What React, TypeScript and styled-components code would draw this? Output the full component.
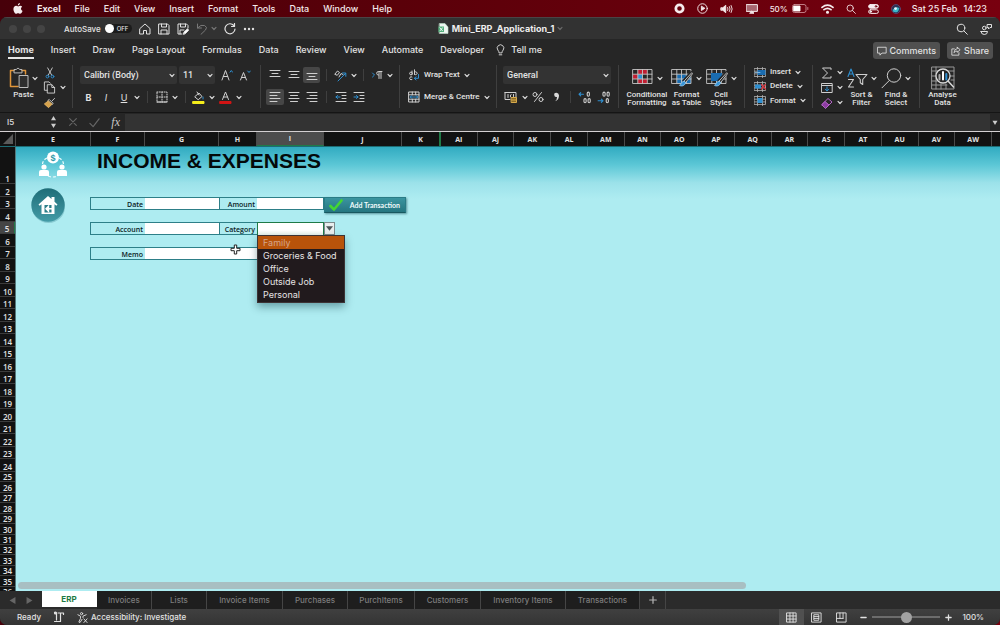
import React from 'react';
import styled, { createGlobalStyle, css } from 'styled-components';

const ui = `Inter, "Liberation Sans", sans-serif`;
const compact = `Roboto, "Liberation Sans", sans-serif`;
const calibri = `"Open Sans", "Noto Sans", sans-serif`;
const ink = '#e2e2e2';
const blue = '#2f8fd0';

const GlobalStyle = createGlobalStyle`
  * { box-sizing: border-box; }
  body { margin: 0; background: #3a0008; font-family: ${ui}; color: ${ink}; }
  button, input, select { font: inherit; color: inherit; border: 0; padding: 0; margin: 0; background: none; }
  svg { display: block; flex: none; }
`;

const Desktop = styled.div`
  height: 100vh;
  min-height: 400px;
  display: flex;
  flex-direction: column;
  overflow: hidden;
  background: linear-gradient(90deg, #47000a, #5a0009 40%, #78000f);
`;

/* ---------- system menu bar ---------- */
const MenuBar = styled.nav`
  flex: none;
  height: 17px;
  display: flex;
  align-items: center;
  padding: 0 13px;
  font-size: 9px;
  font-weight: 500;
  color: #f4e9ea;
`;
const MenuItem = styled.button<{ $strong?: boolean }>`
  margin-left: 14px;
  font-weight: ${(p) => (p.$strong ? 700 : 500)};
`;
const Spacer = styled.div`
  flex: 1;
`;
const StatusIcons = styled.div`
  display: flex;
  align-items: center;
  gap: 12px;
  margin-right: 11px;
`;
const Battery = styled.span`
  display: flex;
  align-items: center;
  gap: 4px;
  font-size: 8px;
`;
const Clock = styled.span`
  display: flex;
  gap: 6px;
`;

/* ---------- window chrome ---------- */
const Window = styled.main`
  flex: 1;
  min-height: 0;
  display: flex;
  flex-direction: column;
  background: #262626;
  border-radius: 7px;
  overflow: hidden;
`;
const TitleBar = styled.header`
  flex: none;
  height: 22px;
  display: grid;
  grid-template-columns: 1fr auto 1fr;
  align-items: center;
  padding: 0 8px 0 9px;
  background: #323232;
  border-top: 1px solid #4a4446;
`;
const TitleSide = styled.div<{ $end?: boolean }>`
  display: flex;
  align-items: center;
  gap: ${(p) => (p.$end ? 12 : 7)}px;
  justify-content: ${(p) => (p.$end ? 'flex-end' : 'flex-start')};
`;
const Lights = styled.div`
  display: flex;
  gap: 6px;
  margin-right: 12px;
`;
const Light = styled.button`
  width: 8px;
  height: 8px;
  border-radius: 50%;
  background: #444;
`;
const AutoSave = styled.label`
  display: flex;
  align-items: center;
  gap: 4px;
  font-size: 8px;
  font-weight: 500;
`;
const Toggle = styled.span`
  display: flex;
  align-items: center;
  gap: 3px;
  width: 27px;
  height: 9px;
  border-radius: 5px;
  background: #1b1b1b;
  font-size: 6px;
`;
const ToggleInput = styled.input`
  appearance: none;
  width: 9px;
  height: 9px;
  border-radius: 50%;
  background: #fff;
`;
const FileName = styled.h1`
  display: flex;
  align-items: center;
  gap: 3px;
  margin: 0;
  font-size: 9px;
  font-weight: 700;
  color: #ededed;
`;
const IconButton = styled.button<{ $dim?: boolean }>`
  display: flex;
  align-items: center;
  gap: 3px;
  opacity: ${(p) => (p.$dim ? 0.4 : 1)};
`;

const TabStrip = styled.nav`
  flex: none;
  height: 23px;
  display: flex;
  align-items: center;
  padding: 0 7px 0 8px;
  gap: 17px;
  font-size: 9px;
  font-weight: 500;
`;
const RibbonTab = styled.button<{ $active?: boolean }>`
  height: 17px;
  white-space: nowrap;
  font-weight: ${(p) => (p.$active ? 700 : 500)};
  border-bottom: 2px solid ${(p) => (p.$active ? '#e6e6e6' : 'transparent')};
`;
const TellMe = styled(RibbonTab)`
  display: flex;
  align-items: center;
  gap: 6px;
  margin-left: -5px;
`;
const PillRow = styled.div`
  display: flex;
  gap: 7px;
`;
const Pill = styled.button`
  height: 17px;
  padding: 0 4px;
  display: flex;
  align-items: center;
  gap: 3px;
  border-radius: 3px;
  background: #505050;
  font-size: 9px;
  font-weight: 500;
`;

/* ---------- ribbon ---------- */
const Ribbon = styled.section`
  flex: none;
  height: 50px;
  display: flex;
  align-items: flex-start;
  padding-top: 3px;
`;
const Group = styled.div<{ $w: number; $pad: number; $gap?: number; $last?: boolean }>`
  flex: none;
  width: ${(p) => p.$w}px;
  height: 43px;
  padding-left: ${(p) => p.$pad}px;
  display: flex;
  gap: ${(p) => p.$gap ?? 0}px;
  border-right: 1px solid ${(p) => (p.$last ? 'transparent' : '#3f3f3f')};
`;
const Stack = styled.div<{ $tight?: boolean }>`
  display: flex;
  flex-direction: column;
  gap: ${(p) => (p.$tight ? 0 : 2)}px;
`;
const ToolRow = styled.div<{ $short?: boolean }>`
  height: ${(p) => (p.$short ? 15 : 20)}px;
  display: flex;
  align-items: center;
`;
const Tool = styled.button<{ $w: number; $on?: boolean; $left?: boolean }>`
  width: ${(p) => p.$w}px;
  height: 16px;
  display: flex;
  align-items: center;
  justify-content: ${(p) => (p.$left ? 'flex-start' : 'center')};
  gap: 4px;
  border-radius: 2px;
  font-size: 9px;
  ${(p) => p.$on && css`background: #464646;`}
`;
const TextTool = styled.button`
  display: flex;
  align-items: center;
  gap: 4px;
  font: 500 8px/12px ${compact};
  white-space: nowrap;
`;
const Rule = styled.span`
  width: 1px;
  height: 12px;
  background: #3f3f3f;
`;
const BigTool = styled.button<{ $w: number }>`
  width: ${(p) => p.$w}px;
  display: flex;
  flex-direction: column;
  align-items: center;
  justify-content: flex-start;
  font: 500 8px/8px ${compact};
`;
const BigIcon = styled.span`
  height: 26px;
  display: flex;
  align-items: center;
  gap: 3px;
`;
const PickerFrame = styled.label<{ $w: number }>`
  width: ${(p) => p.$w}px;
  height: 18px;
  margin-right: 2px;
  display: grid;
  align-items: center;
  background: #333;
  border-radius: 2px;
  > * { grid-area: 1 / 1; }
  > svg { justify-self: end; margin-right: 2px; pointer-events: none; }
`;
const Picker = styled.select`
  appearance: none;
  width: 100%;
  height: 18px;
  padding: 0 4px;
  font: 500 9px/18px ${compact};
  outline: 0;
`;

/* ---------- formula bar ---------- */
const FormulaBar = styled.section`
  flex: none;
  height: 20px;
  display: flex;
  align-items: center;
  border-top: 1px solid #151515;
  border-bottom: 1px solid #d4d0d2;
`;
const NameBox = styled.input`
  width: 50px;
  padding-left: 7px;
  font-size: 8px;
  font-weight: 500;
  outline: 0;
`;
const FormulaButtons = styled.div`
  width: 68px;
  display: flex;
  align-items: center;
  justify-content: space-between;
  padding: 0 5px 0 11px;
`;
const Fx = styled.span`
  font: italic 12px "Liberation Serif", serif;
  color: #c9c9c9;
`;
const FormulaInput = styled.input`
  flex: 1;
  min-width: 0;
  height: 17px;
  background: #333;
  outline: 0;
`;

/* ---------- sheet ---------- */
const ColumnHeads = styled.div`
  flex: none;
  height: 15px;
  display: flex;
  background: #121212;
  border-bottom: 1px solid #1d6c74;
  padding-right: 8px;
`;
const ColumnHead = styled.div<{ $w?: number; $on?: boolean; $split?: boolean }>`
  ${(p) => (p.$w ? css`flex: none; width: ${p.$w}px;` : css`flex: 1; min-width: 0;`)}
  display: flex;
  align-items: center;
  justify-content: center;
  font: 700 7px ${calibri};
  border-right: 1px solid #4a4a4a;
  ${(p) => p.$split && css`border-right: 2px solid #1f7a47;`}
  ${(p) => p.$on && css`background: #4d4d4d; border-bottom: 1px solid #1f7a47;`}
`;
const SheetArea = styled.div`
  flex: 1;
  min-height: 0;
  display: flex;
`;
const RowHeads = styled.div`
  width: 16px;
  flex: none;
  overflow: hidden;
  background: #121212;
  border-right: 1px solid #54797c;
`;
const RowBlock = styled.div<{ $h: number }>`
  height: ${(p) => p.$h}px;
  display: grid;
  grid-auto-rows: 1fr;
`;
const RowHead = styled.div<{ $on?: boolean }>`
  display: flex;
  align-items: flex-end;
  justify-content: center;
  min-height: 0;
  border-bottom: 1px solid #3c3c3c;
  font: 600 8px/9px ${calibri};
  ${(p) => p.$on && css`background: #454545; border-right: 1px solid #1f7a47;`}
`;
const Canvas = styled.div`
  position: relative;
  flex: 1;
  display: flex;
  overflow: hidden;
  color: #0b2023;
  background: linear-gradient(#31abc1, #5cc7d6 18px, #9ce2ea 36px, #aeecf1 52px);
`;
const IconColumn = styled.div`
  width: 74px;
  flex: none;
  padding: 4px 0 0 14px;
  display: flex;
  flex-direction: column;
  gap: 8px;
  > svg:first-child { margin-left: 8px; }
`;
const Content = styled.div`
  flex: 1;
`;
const SheetTitle = styled.h2`
  height: 50px;
  margin: 0;
  padding: 2px 0 0 7px;
  font: 700 21px/24px "Liberation Sans", sans-serif;
  color: #04090a;
`;
const Form = styled.form`
  display: flex;
  flex-direction: column;
  gap: 12px;
`;
const FormRow = styled.div`
  height: 13px;
  display: flex;
`;
const FieldLabel = styled.label<{ $w: number; $inner?: boolean }>`
  width: ${(p) => p.$w}px;
  border: 1px solid #2d7f88;
  border-right-width: 0;
  border-left-width: ${(p) => (p.$inner ? 0 : 1)}px;
  padding: 2px 2px 0 0;
  text-align: right;
  font: 600 7px/10px ${calibri};
`;
const fieldBox = css<{ $w: number }>`
  width: ${(p) => p.$w}px;
  height: 13px;
  background: #fff;
  border: 1px solid #2d7f88;
  border-left-width: 0;
  border-radius: 0;
  outline: 0;
`;
const Field = styled.input<{ $w: number }>`
  ${fieldBox}
`;
const AddButton = styled.button`
  width: 82px;
  height: 16px;
  padding: 0 5px 1px 4px;
  display: flex;
  align-items: center;
  justify-content: space-between;
  background: linear-gradient(#3b95a0, #257680);
  border: 1px solid #2a7c86;
  border-bottom-color: #185860;
  box-shadow: 1px 1px 2px rgba(0, 60, 70, 0.5);
  color: #f2fbfc;
  font: 700 7px Lato, sans-serif;
  white-space: nowrap;
`;
const Combo = styled.div`
  position: relative;
  display: flex;
`;
const ComboField = styled.input<{ $w: number }>`
  ${fieldBox}
  height: 14px;
  border: 1px solid #1f7a47;
  background: linear-gradient(#fff, #fff 60%, #e8f3ee);
`;
const ComboArrow = styled.button`
  width: 11px;
  height: 13px;
  display: flex;
  align-items: center;
  justify-content: center;
  background: #e9eeee;
  border: 1px solid #7c8b8d;
`;
const Options = styled.ul`
  position: absolute;
  z-index: 2;
  top: 13px;
  left: 0;
  width: 88px;
  margin: 0;
  padding: 0 0 1px;
  list-style: none;
  background: #211a1d;
  color: #e6e3e4;
  border: 1px solid #3c3335;
  box-shadow: 0 4px 8px rgba(0, 50, 60, 0.4);
  font: 400 9px/13px ${ui};
`;
const Option = styled.li<{ $on?: boolean }>`
  padding-left: 5px;
  white-space: nowrap;
  ${(p) => p.$on && css`background: #b8530a; color: #d5a58a;`}
`;
const Pointer = styled.svg`
  position: absolute;
  z-index: 3;
  left: 214px;
  top: 97px;
`;
const ScrollThumb = styled.div`
  position: absolute;
  left: 2px;
  bottom: 2px;
  width: 74%;
  height: 7px;
  border-radius: 4px;
  background: #a8bfc2;
`;

/* ---------- sheet tabs and status ---------- */
const SheetTabs = styled.nav`
  flex: none;
  height: 18px;
  display: flex;
  align-items: flex-start;
  background: #2b2b2b;
  font-size: 8px;
  font-weight: 500;
`;
const TabArrows = styled.div`
  width: 42px;
  height: 18px;
  display: flex;
  align-items: center;
  justify-content: center;
  gap: 10px;
`;
const SheetTab = styled.button<{ $w: number; $on?: boolean; $plain?: boolean }>`
  flex: none;
  width: ${(p) => p.$w}px;
  height: ${(p) => (p.$on ? 16 : 18)}px;
  background: ${(p) => (p.$on ? '#fff' : p.$plain ? '#2b2b2b' : '#1e1e1e')};
  color: ${(p) => (p.$on ? '#1d7a43' : p.$plain ? '#bbb' : '#7d7d7d')};
  font-weight: ${(p) => (p.$on ? 700 : 500)};
  border-right: 1px solid ${(p) => (p.$on ? '#fff' : '#454545')};
  display: flex;
  align-items: center;
  justify-content: center;
`;
const StatusBar = styled.footer`
  flex: none;
  height: 16px;
  display: flex;
  align-items: center;
  padding: 0 16px 0 17px;
  background: linear-gradient(#404040, #343434);
  font-size: 8px;
  font-weight: 500;
`;
const StatusItem = styled.span`
  display: flex;
  align-items: center;
  gap: 3px;
  margin-right: 12px;
`;
const ViewButton = styled.button<{ $on?: boolean }>`
  width: 25px;
  height: 16px;
  display: flex;
  align-items: center;
  justify-content: center;
  background: ${(p) => (p.$on ? '#505050' : 'transparent')};
`;
const ZoomGroup = styled.div`
  display: flex;
  align-items: center;
  gap: 5px;
  margin-left: 6px;
`;
const Zoom = styled.input`
  appearance: none;
  width: 68px;
  height: 12px;
  background: linear-gradient(#6c6c6c, #6c6c6c) center / 100% 2px no-repeat;
  &::-webkit-slider-thumb {
    appearance: none;
    width: 11px;
    height: 11px;
    border-radius: 50%;
    background: #a2a2a2;
  }
`;
const ZoomValue = styled.output`
  margin-left: 5px;
`;

/* ---------- drawings ---------- */
type IconProps = { w: number; h?: number; box?: string; sw?: number; c?: string; children: React.ReactNode };
const Icon = ({ w, h = w, box = '0 0 12 12', sw = 1, c = '#cfcfcf', children }: IconProps) => (
  <svg width={w} height={h} viewBox={box} fill="none" stroke={c} strokeWidth={sw} strokeLinecap="round" strokeLinejoin="round" aria-hidden="true">
    {children}
  </svg>
);
const Chevron = ({ c = '#d8d8d8' }: { c?: string }) => (
  <Icon w={6} h={5} box="0 0 6 5" sw={1.2} c={c}><path d="M1 1.400 3 3.500 5 1.400" /></Icon>
);
const Triangle = ({ d, c = '#bcbcbc', w = 5, h = 5 }: { d: string; c?: string; w?: number; h?: number }) => (
  <svg width={w} height={h} viewBox="0 0 6 6" fill={c} aria-hidden="true"><path d={d} /></svg>
);
const Lines = ({ rows }: { rows: number[][] }) => (
  <Icon w={12}>{rows.map(([x1, x2, y]) => <path key={y} d={`M${x1} ${y}H${x2}`} />)}</Icon>
);
const SearchIcon = ({ w, c = ink }: { w: number; c?: string }) => (
  <Icon w={w} c={c}><circle cx="5" cy="5" r="3.8" /><path d="m7.900 7.900 3.400 3.400" /></Icon>
);
const MiniGrid = ({ children }: { children?: React.ReactNode }) => (
  <Icon w={12} h={11} box="0 0 12 11" sw={0.8} c="#b5b5b5">
    <path d="M.5 1.500h11v8H.5zM.5 4.200h11M.5 6.900h11M3.500.5v10M8.500.5v10" />
    {children}
  </Icon>
);
const Grid = ({ fill, children }: { fill: React.ReactNode; children?: React.ReactNode }) => (
  <Icon w={22} h={20} box="0 0 22 20" sw={0.9} c="#c4c4c4">
    {fill}
    <path d="M1 1.500h19v14H1zM1 6.200h19M1 11h19M5.800 1.500v14M10.500 1.500v14M15.300 1.500v14" />
    {children}
  </Icon>
);
const Brush = () => (
  <>
    <path d="M20.500 5 13.500 12.800" stroke="#262626" strokeWidth="4" />
    <path d="m20.500 5-7.500 8.200 1.600 1.400L21.300 6z" fill="#262626" stroke="#d0d0d0" />
    <path d="M12.800 13.200c-2.300.2-2.400 2.600-4.300 4.200 2.800 1.400 6-.2 6-2.900z" fill="#3795d8" stroke="#8fc4ea" />
  </>
);

const menus = ['File', 'Edit', 'View', 'Insert', 'Format', 'Tools', 'Data', 'Window', 'Help'];
const ribbonTabs = ['Home', 'Insert', 'Draw', 'Page Layout', 'Formulas', 'Data', 'Review', 'View', 'Automate', 'Developer'];
const fixedColumns: [string, number][] = [['E', 75], ['F', 54], ['G', 74], ['H', 38], ['I', 67], ['J', 78], ['K', 39]];
const fluidColumns = ['AI', 'AJ', 'AK', 'AL', 'AM', 'AN', 'AO', 'AP', 'AQ', 'AR', 'AS', 'AT', 'AU', 'AV', 'AW'];
const sheets: [string, number][] = [['ERP', 55], ['Invoices', 55], ['Lists', 55], ['Invoice Items', 76], ['Purchases', 65], ['PurchItems', 67], ['Customers', 66], ['Inventory Items', 85], ['Transactions', 74]];
const categories = ['Family', 'Groceries & Food', 'Office', 'Outside Job', 'Personal'];
const range = (a: number, b: number) => Array.from({ length: b - a + 1 }, (_, i) => a + i);

function SystemMenu() {
  const c = '#f6ecee';
  return (
    <MenuBar>
      <svg width="10" height="11" viewBox="0 0 20 23" fill={c} aria-hidden="true">
        <path d="M14 0c.2 2.600-2 5-4.300 5C9.400 2.600 11.600.3 14 0zM18.600 7.900c-3.600 2.300-3 7.100.9 8.600-1.100 3-3 6-5.200 6-1.700 0-2.200-1-4.200-1s-2.600 1-4.200 1C3.500 22.500.4 17.400.4 13c0-4.300 2.700-7 5.600-7 1.800 0 3.100 1.100 4.400 1.100S13.200 5.900 15 5.900c1.400 0 2.800.8 3.600 2z" />
      </svg>
      <MenuItem $strong>Excel</MenuItem>
      {menus.map((m) => <MenuItem key={m}>{m}</MenuItem>)}
      <Spacer />
      <StatusIcons>
        <Icon w={11} c={c} sw={3}><circle cx="6" cy="6" r="4" /></Icon>
        <Icon w={11} c={c}><circle cx="6" cy="6" r="5.200" /><path d="M4.800 3.800v4.400L8.300 6z" fill={c} /></Icon>
        <Icon w={14} h={10} box="0 0 16 12" c={c} sw={1.1}><path d="M1 4.500h2L6.500 1.500v9L3 7.500H1z" fill={c} /><path d="M8.800 4.200q1 1.800 0 3.600M10.900 3q1.800 3 0 6M13 1.800q2.600 4.200 0 8.400" /></Icon>
        <Icon w={12} h={10} box="0 0 12 10" c={c}><path d="M.6.600h10.800v6.800H.6z" fill="#a8666f" /><path d="M4 9.200h4L6 7.400z" fill={c} /></Icon>
        <Battery>50%<Icon w={17} h={9} box="0 0 17 9" c="#c98a92" sw={0.9}><rect x=".5" y=".5" width="13.500" height="8" rx="2" /><path d="M15.800 3.500v2" /><rect x="2" y="2" width="6" height="5" fill="#fff" stroke="#fff" /></Icon></Battery>
        <Icon w={13} h={10} box="0 0 13 10" c={c} sw={1.7}><path d="M1 3.400q5.500-4.400 11 0M3 5.700q3.500-2.800 7 0" /><circle cx="6.500" cy="8.200" r=".7" fill={c} /></Icon>
        <SearchIcon w={10} c={c} />
        <Icon w={11} h={10} box="0 0 11 10" c={c}><rect x=".6" y=".6" width="9.800" height="3.600" rx="1.800" fill={c} /><circle cx="8" cy="2.400" r=".8" stroke="#70000e" /><rect x=".6" y="5.800" width="9.800" height="3.600" rx="1.800" /><circle cx="2.800" cy="7.600" r=".8" fill={c} /></Icon>
        <Icon w={10} c="#5b4a78"><circle cx="6" cy="6" r="5.400" fill="#2d3153" /><path d="M2 7q4-5 8-2-1 5-5 5-3 0-3-3z" fill="#3bb6c9" stroke="none" /><circle cx="5.500" cy="5.500" r="1.700" fill="#e9f6ff" stroke="none" /></Icon>
      </StatusIcons>
      <Clock><span>Sat 25 Feb</span><span>14:23</span></Clock>
    </MenuBar>
  );
}

function RibbonTools() {
  return (
    <Ribbon>
      <Group $w={73} $pad={10} $gap={6}>
        <BigTool $w={27}>
          <BigIcon>
            <Icon w={20} h={22} box="0 0 20 22" sw={1.5} c="#e0953a">
              <path d="M9 19.500H1.500v-16H5M13 3.500h3.500V7" /><path d="M5 5.500v-3h2.200q1.800-3 3.600 0H13v3z" stroke="#b9b9b9" strokeWidth="1" /><path d="M10.500 8.500h8.500v12h-8.500z" stroke="#bdbdbd" strokeWidth="1" fill="#2e2e2e" />
            </Icon>
            <Chevron />
          </BigIcon>
          Paste
        </BigTool>
        <Stack $tight>
          <ToolRow $short><Tool $w={24} $left aria-label="Cut"><Icon w={13} h={12} box="0 0 14 12"><path d="M5 .5 9.500 8.500M10 .5 5.500 8.500" /><circle cx="4.800" cy="9.800" r="1.500" stroke={blue} /><circle cx="10.200" cy="9.800" r="1.500" stroke={blue} /></Icon></Tool></ToolRow>
          <ToolRow $short><Tool $w={24} $left aria-label="Copy"><Icon w={13} h={13} box="0 0 14 13"><path d="M4.500 9.500H1.500v-9h5l1.500 1.500M5 3.500h4.500l3 3v6H5zM9.500 3.500v3h3" /></Icon><Chevron /></Tool></ToolRow>
          <ToolRow $short><Tool $w={24} $left aria-label="Format painter"><Icon w={13} h={12} box="0 0 14 12"><path d="m12.500 1-3 3M7 2.500l4 4-1.500 1.200-4-4z" /><path d="M5.500 4 1.500 7l4.500 4 3.500-3.500z" fill="#d6a24c" stroke="#e6b562" /></Icon></Tool></ToolRow>
        </Stack>
      </Group>

      <Group $w={188} $pad={7}>
        <Stack>
          <ToolRow>
            <PickerFrame $w={97}><Picker aria-label="Font"><option>Calibri (Body)</option></Picker><Chevron /></PickerFrame>
            <PickerFrame $w={36}><Picker aria-label="Font size"><option>11</option></Picker><Chevron /></PickerFrame>
            <Tool $w={19} aria-label="Grow font"><Icon w={12}><path d="m1 11 3.500-9.500L8 11M2.300 7.500h4.400" /><path d="M9 3.200 10.300 1.500 11.600 3.200" stroke={blue} /></Icon></Tool>
            <Tool $w={18} aria-label="Shrink font"><Icon w={12}><path d="m1.500 11 3-7.500 3 7.500M2.500 8.500h4" /><path d="M8.700 2 10 3.500 11.300 2" stroke={blue} /></Icon></Tool>
          </ToolRow>
          <ToolRow>
            <Tool $w={17}><b>B</b></Tool>
            <Tool $w={18}><i>I</i></Tool>
            <Tool $w={18}><u>U</u></Tool>
            <Tool $w={8} aria-label="Underline styles"><Chevron /></Tool>
            <Tool $w={12}><Rule /></Tool>
            <Tool $w={28} aria-label="Borders"><Icon w={12}><path d="M1 1h10v10H1zM6 1v10M1 6h10" strokeDasharray="1 1.400" /><path d="M1 11h10" /></Icon><Chevron /></Tool>
            <Tool $w={8}><Rule /></Tool>
            <Tool $w={28} aria-label="Fill colour"><Icon w={13} h={13} box="0 0 13 13"><path d="M1 10.500h11v2H1z" fill="#f3ec1b" stroke="#f3ec1b" /><path d="m3 5.500 4-3.500 3 3.500-3.500 3zM5 1l2 3" /><path d="M11 6v2" stroke={blue} /></Icon><Chevron /></Tool>
            <Tool $w={27} aria-label="Font colour"><Icon w={13} h={13} box="0 0 13 13"><path d="M1 10.500h11v2H1z" fill="#d11414" stroke="#d11414" /><path d="M3.500 8.500 6.500 1l3 7.500M4.500 6h4" /></Icon><Chevron /></Tool>
          </ToolRow>
        </Stack>
      </Group>

      <Group $w={139} $pad={5}>
        <Stack>
          <ToolRow>
            <Tool $w={18} aria-label="Top align"><Lines rows={[[1, 11, 1.5], [3, 9, 4.5], [1, 11, 7.5]]} /></Tool>
            <Tool $w={19} aria-label="Middle align"><Lines rows={[[1, 11, 2.5], [3, 9, 5.5], [1, 11, 8.5]]} /></Tool>
            <Tool $w={17} $on aria-label="Bottom align"><Lines rows={[[1, 11, 4.5], [3, 9, 7.5], [1, 11, 10.5]]} /></Tool>
            <Tool $w={12}><Rule /></Tool>
            <Tool $w={27} aria-label="Orientation"><Icon w={13} box="0 0 13 13"><path d="m1 5 2.500-3 2 1.500-2 2.500zM5 8l2-3.500 2 1" /><path d="m4 12 7.500-7.500M8.500 4h3.300v3.300" stroke={blue} /></Icon><Chevron /></Tool>
            <Tool $w={8}><Rule /></Tool>
            <Tool $w={30} aria-label="Text direction"><Icon w={12}><path d="m1.500 4 2 2-2 2" stroke={blue} /><path d="M8 2.500v7M10 2.500v7M11 2.500H7.500a1.800 1.800 0 0 0 0 3.600" /></Icon><Chevron /></Tool>
          </ToolRow>
          <ToolRow>
            <Tool $w={18} $on aria-label="Align left"><Lines rows={[[1, 11, 1.5], [1, 8, 4.5], [1, 11, 7.5], [1, 8, 10.5]]} /></Tool>
            <Tool $w={19} aria-label="Centre"><Lines rows={[[1, 11, 1.5], [2.5, 9.5, 4.5], [1, 11, 7.5], [2.5, 9.5, 10.5]]} /></Tool>
            <Tool $w={17} aria-label="Align right"><Lines rows={[[1, 11, 1.5], [4, 11, 4.5], [1, 11, 7.5], [4, 11, 10.5]]} /></Tool>
            <Tool $w={12}><Rule /></Tool>
            <Tool $w={18} aria-label="Decrease indent"><Icon w={12}><path d="M1 1.500h10M7 4.500h4M7 7.500h4M1 10.500h10" /><path d="M5 6H1M2.500 4.500 1 6l1.500 1.500" stroke={blue} /></Icon></Tool>
            <Tool $w={18} aria-label="Increase indent"><Icon w={12}><path d="M1 1.500h10M7 4.500h4M7 7.500h4M1 10.500h10" /><path d="M1 6h4M3.500 4.500 5 6 3.500 7.500" stroke={blue} /></Icon></Tool>
          </ToolRow>
        </Stack>
      </Group>

      <Group $w={97} $pad={8}>
        <Stack>
          <ToolRow><TextTool><Icon w={12}><path d="M2 3.500a1.400 1.400 0 1 0 2 0zM4 2v3.500M6.500.8v4.700M6.500 3.500a1.400 1.400 0 1 1 0 1.500M4 8a1.500 1.500 0 1 0 0 2.500" /><path d="M10.500 5.500v3.800H6.500M8 7.700 6.500 9.300 8 11" stroke={blue} /></Icon>Wrap Text<Chevron /></TextTool></ToolRow>
          <ToolRow><TextTool><Icon w={12}><path d="M1 1h10v10H1zM1 3.800h10M1 8.200h10M4.300 1v2.800M7.700 1v2.800M4.300 8.200V11M7.700 8.200V11" /><path d="M2.200 6h7.600M3.500 4.800 2.200 6l1.300 1.200M8.500 4.800 9.800 6 8.500 7.200" stroke={blue} /></Icon>Merge &amp; Centre<Chevron /></TextTool></ToolRow>
        </Stack>
      </Group>

      <Group $w={122} $pad={6}>
        <Stack>
          <ToolRow><PickerFrame $w={108}><Picker aria-label="Number format"><option>General</option></Picker><Chevron /></PickerFrame></ToolRow>
          <ToolRow>
            <Tool $w={25} aria-label="Currency"><Icon w={14} h={12} box="0 0 14 12"><path d="M1 1.500h11v5M1 1.500v7h5M4 3.500v3M7 3.500q-2 1.500 0 3M9.500 3.500v2" /><path d="M7.500 6.500h5v5h-5zM7.500 9h5" fill="#8a6a26" stroke="#d8ab4c" /></Icon><Chevron /></Tool>
            <Tool $w={19} aria-label="Percent"><Icon w={12}><circle cx="3" cy="3.500" r="2" /><circle cx="9" cy="8.500" r="2" /><path d="M9.500 1.500l-7 9" /></Icon></Tool>
            <Tool $w={18} aria-label="Comma"><Icon w={9} h={12} box="0 0 8 11"><path d="M4 1.500a2 2 0 1 0 .5 3.900Q4.500 8 2.500 9.500 6.500 8.500 6.300 4 6 1.600 4 1.500z" fill="#d8d8d8" stroke="none" /></Icon></Tool>
            <Tool $w={10}><Rule /></Tool>
            <Tool $w={19} aria-label="Increase decimal"><Icon w={13}><path d="M5 3H1M2.500 1.500 1 3l1.500 1.500" stroke={blue} /><rect x="8.500" y="1" width="2" height="3.800" rx="1" /><rect x="5.500" y="7" width="2" height="3.800" rx="1" /><rect x="9.300" y="7" width="2" height="3.800" rx="1" /></Icon></Tool>
            <Tool $w={18} aria-label="Decrease decimal"><Icon w={13}><path d="M1 9h4.500M4 7.500 5.500 9 4 10.500" stroke={blue} /><rect x="5.500" y="1" width="2" height="3.800" rx="1" /><rect x="9.300" y="1" width="2" height="3.800" rx="1" /><rect x="8.500" y="7" width="2" height="3.800" rx="1" /></Icon></Tool>
          </ToolRow>
        </Stack>
      </Group>

      <Group $w={126} $pad={6}>
        <BigTool $w={44}>
          <BigIcon><Grid fill={<><path d="M5.800 1.500h9.500v4.700H5.800zM5.800 11h9.500v4.700H5.800z" fill="#c01f33" stroke="none" /><path d="M1 6.200h4.800V11H1z" fill="#c01f33" stroke="none" /><path d="M5.800 6.200h4.700V11H5.800z" fill={blue} stroke="none" /></>} /><Chevron /></BigIcon>
          Conditional Formatting
        </BigTool>
        <BigTool $w={35}>
          <BigIcon><Grid fill={<path d="M5.800 6.200h14.200v9.500H5.800z" fill="#1a6cb0" stroke="none" />}><Brush /></Grid><Chevron /></BigIcon>
          Format<br />as Table
        </BigTool>
        <BigTool $w={34}>
          <BigIcon><Grid fill={null}><path d="M5 5h11v8H5z" fill="#1a6cb0" stroke="none" /><Brush /></Grid><Chevron /></BigIcon>
          Cell<br />Styles
        </BigTool>
      </Group>

      <Group $w={68} $pad={9}>
        <Stack $tight>
          <ToolRow $short><TextTool><MiniGrid><path d="M3.500 3h8v5h-8z" fill="#1a6cb0" stroke="none" /><path d="M1 5.500h5" stroke="#8fc4ea" /></MiniGrid>Insert<Chevron /></TextTool></ToolRow>
          <ToolRow $short><TextTool><MiniGrid><path d="M1 3.500h6v4H1z" fill={blue} stroke="none" /><path d="m7.500 3.500 4 4.500M11.500 3.500l-4 4.500" stroke="#d5303b" strokeWidth="1.200" /></MiniGrid>Delete<Chevron /></TextTool></ToolRow>
          <ToolRow $short><TextTool><MiniGrid><path d="M3.500 3h5v5h-5z" fill={blue} stroke="none" /></MiniGrid>Format<Chevron /></TextTool></ToolRow>
        </Stack>
      </Group>

      <Group $w={107} $pad={8}>
        <Stack $tight>
          <ToolRow $short><Tool $w={22} $left aria-label="AutoSum"><Icon w={12}><path d="M10 2.500V1H1.500L6.500 6l-5 5H10V9.500" /></Icon><Chevron /></Tool></ToolRow>
          <ToolRow $short><Tool $w={22} $left aria-label="Fill"><Icon w={12}><path d="M.8 1.500h10.400v9H.8zM.8 3.500h10.400" /><path d="M6 4.800v4M4.200 7.300 6 9l1.800-1.700" stroke={blue} /></Icon><Chevron /></Tool></ToolRow>
          <ToolRow $short><Tool $w={22} $left aria-label="Clear"><Icon w={12} c="#b765c9"><path d="M1 7.500 7 1.500l4 3.500-6 6z" /><path d="m1 7.500 3-3 4 3.500-3 3z" fill="#8d3ba3" /></Icon><Chevron /></Tool></ToolRow>
        </Stack>
        <BigTool $w={37}>
          <BigIcon><Icon w={21} h={20} box="0 0 21 20" sw={1.1}><path d="m1 8.500 3-7.500 3 7.500M2 6h4" stroke={blue} /><path d="M1.500 11.500h5l-5 7.500h5" /><path d="M9 6.500h11l-4.300 5v5l-2.400-1.800v-3.200z" /></Icon><Chevron /></BigIcon>
          Sort &amp;<br />Filter
        </BigTool>
        <BigTool $w={32}>
          <BigIcon><Icon w={21} h={21} box="0 0 21 21"><circle cx="13" cy="7.500" r="6.700" /><path d="M8.300 12.500 1 19.800" /></Icon><Chevron /></BigIcon>
          Find &amp;<br />Select
        </BigTool>
      </Group>

      <Group $w={46} $pad={1} $last>
        <BigTool $w={43}>
          <BigIcon><Icon w={24} h={24} box="0 0 24 24"><path d="M1 1h22v22H1zM1 5h22M1 10h5M1 15h5M1 19h15M5 1v22M10 18v5M15 18v5M19 10h4M20 14h3" stroke="#969696" /><circle cx="12" cy="10" r="7" fill="#262626" stroke="#d8d8d8" strokeWidth="1.300" /><path d="m17 15 5.500 6" stroke="#d8d8d8" strokeWidth="1.500" /><path d="M8.500 9v4.500" stroke="#aaa" strokeWidth="2" /><path d="M12 6v7.500" stroke="#fff" strokeWidth="2" /><path d="M15.300 8v5.500" stroke={blue} strokeWidth="2" /></Icon></BigIcon>
          Analyse<br />Data
        </BigTool>
      </Group>
    </Ribbon>
  );
}

function Worksheet() {
  return (
    <>
      <ColumnHeads>
        <ColumnHead $w={16}><svg width="12" height="12" viewBox="0 0 12 12" fill="#5a5a5a" aria-hidden="true"><path d="M11 1v10H1z" /></svg></ColumnHead>
        {fixedColumns.map(([name, w]) => <ColumnHead key={name} $w={w} $on={name === 'I'} $split={name === 'K'}>{name}</ColumnHead>)}
        {fluidColumns.map((name) => <ColumnHead key={name}>{name}</ColumnHead>)}
      </ColumnHeads>
      <SheetArea>
        <RowHeads>
          <RowBlock $h={37}><RowHead>1</RowHead></RowBlock>
          <RowBlock $h={288}>{range(2, 24).map((n) => <RowHead key={n} $on={n === 5}>{n}</RowHead>)}</RowBlock>
          <RowBlock $h={125}>{range(25, 36).map((n) => <RowHead key={n}>{n}</RowHead>)}</RowBlock>
        </RowHeads>
        <Canvas>
          <IconColumn>
            <svg width="30" height="28" viewBox="0 0 30 28" aria-hidden="true">
              <g fill="none" stroke="#e9fbfd" strokeWidth="1.200" strokeDasharray="3 2"><path d="M9 7Q5 9 4.500 13M21 7q4 2 4.500 6M10 25q5 2 10 0" /></g>
              <circle cx="15" cy="6.500" r="6" fill="#fff" />
              <text x="15" y="10" textAnchor="middle" fontFamily="Liberation Sans, sans-serif" fontWeight="700" fontSize="9" fill="#2d99aa">$</text>
              <g fill="#fff"><circle cx="6" cy="16" r="2.600" /><path d="M1 25v-4q0-2 2-2h6q2 0 2 2v4z" /><circle cx="24" cy="16" r="2.600" /><path d="M19 25v-4q0-2 2-2h6q2 0 2 2v4z" /></g>
            </svg>
            <svg width="36" height="38" viewBox="0 0 36 38" aria-hidden="true">
              <defs><linearGradient id="disc" x1="0" y1="0" x2="0" y2="1"><stop offset="0" stopColor="#1f6d78" /><stop offset="1" stopColor="#439ba6" /></linearGradient></defs>
              <ellipse cx="18.500" cy="20" rx="16.500" ry="16" fill="#3f8d97" opacity=".35" />
              <circle cx="18" cy="18" r="16.700" fill="url(#disc)" />
              <path d="M18 9 8.500 17.500l1.200 1.300 1.800-1.500V27h13v-9.700l1.800 1.500 1.200-1.300-3-2.700V10h-3v2z" fill="#fff" />
              <path d="M14.500 18h7v7.500h-7z" fill="#2c7f8a" />
              <path d="M16 21.700h6M16 21.700l2.500-2.500v5z" stroke="#fff" strokeWidth="1.400" fill="#fff" />
            </svg>
          </IconColumn>
          <Content>
            <SheetTitle>INCOME &amp; EXPENSES</SheetTitle>
            <Form onSubmit={(e) => e.preventDefault()}>
              <FormRow>
                <FieldLabel $w={55} htmlFor="date">Date</FieldLabel><Field $w={75} id="date" />
                <FieldLabel $w={37} $inner htmlFor="amount">Amount</FieldLabel><Field $w={67} id="amount" />
                <AddButton><Icon w={14} h={12} box="0 0 14 12" sw={2.6} c="#43d633"><path d="m1.500 7 3.500 3.500L12.500 1.500" /></Icon>Add Transaction</AddButton>
              </FormRow>
              <FormRow>
                <FieldLabel $w={55} htmlFor="account">Account</FieldLabel><Field $w={75} id="account" />
                <FieldLabel $w={37} $inner htmlFor="category">Category</FieldLabel>
                <Combo>
                  <ComboField $w={67} id="category" role="combobox" aria-expanded="true" aria-controls="category-list" />
                  <ComboArrow type="button" aria-label="Show categories"><Triangle d="M0 1h6L3 5z" c="#4c5557" w={7} h={7} /></ComboArrow>
                  <Options id="category-list" role="listbox">
                    {categories.map((c) => <Option key={c} role="option" aria-selected={c === 'Family'} $on={c === 'Family'}>{c}</Option>)}
                  </Options>
                </Combo>
              </FormRow>
              <FormRow>
                <FieldLabel $w={55} htmlFor="memo">Memo</FieldLabel><Field $w={179} id="memo" />
              </FormRow>
            </Form>
          </Content>
          <Pointer width="11" height="11" viewBox="0 0 11 11" aria-hidden="true">
            <path d="M4.300 1h2.400v3.300H10v2.400H6.700V10H4.300V6.700H1V4.300h3.300z" fill="#fff" stroke="#222" />
          </Pointer>
          <ScrollThumb />
        </Canvas>
      </SheetArea>
    </>
  );
}

export default function App() {
  return (
    <Desktop>
      <GlobalStyle />
      <SystemMenu />
      <Window>
        <TitleBar>
          <TitleSide>
            <Lights><Light aria-label="Close" /><Light aria-label="Minimise" /><Light aria-label="Zoom" /></Lights>
            <AutoSave>AutoSave<Toggle><ToggleInput type="checkbox" />OFF</Toggle></AutoSave>
            <IconButton aria-label="Home"><Icon w={12} c={ink}><path d="M1 5.500 6 1l5 4.500V11H7.500V7.500h-3V11H1z" /></Icon></IconButton>
            <IconButton aria-label="Save"><Icon w={12} c={ink}><path d="M1 1h8.500L11 2.500V11H1zM3.500 1v3h5V1M3 11V7h6v4" /></Icon></IconButton>
            <IconButton aria-label="Save as"><Icon w={12} c={ink}><path d="M5 11H1V1h8.500L11 2.500V5M3.500 1v3h5V1M3 11V7h4" /><path d="m6.500 11 .5-2 3.500-3.200 1.200 1.400L8.500 10.500z" fill="#fff" /></Icon></IconButton>
            <IconButton $dim aria-label="Undo"><Icon w={12} c={ink}><path d="M1.500 1v4h4M1.500 5q3.500-4 7-2.500T9.500 7L5 11.300" /></Icon><Chevron /></IconButton>
            <IconButton aria-label="Redo"><Icon w={12} c={ink} sw={1.2}><path d="M9.800 2.500A5 5 0 1 0 11 6M10.500.5v3h-3" /></Icon></IconButton>
            <IconButton aria-label="More"><svg width="12" height="4" viewBox="0 0 12 4" fill={ink} aria-hidden="true"><circle cx="2" cy="2" r="1.200" /><circle cx="6" cy="2" r="1.200" /><circle cx="10" cy="2" r="1.200" /></svg></IconButton>
          </TitleSide>
          <FileName>
            <Icon w={11} h={11} box="0 0 10 11" sw={0.6} c="#bfe3cd"><path d="M1 .6h5.500L9.500 4v6.400H1z" fill="#eef6f1" /><path d="M0 3.500h5.500V9H0z" fill="#4fae79" stroke="none" /><path d="m1.500 4.800 2.500 3M4 4.800l-2.500 3" stroke="#fff" strokeWidth=".9" /></Icon>
            Mini_ERP_Application_1<Chevron c="#6a6a6a" />
          </FileName>
          <TitleSide $end>
            <IconButton aria-label="Search"><SearchIcon w={12} /></IconButton>
            <IconButton aria-label="Presence"><Icon w={12} c={ink}><path d="M7.500 1.500h4v3h-1.500L8.500 6V4.500h-1zM1 8.500h6.500q0 3-3.200 3T1 8.500z" /><circle cx="4.300" cy="5" r="1.800" /></Icon></IconButton>
          </TitleSide>
        </TitleBar>
        <TabStrip>
          {ribbonTabs.map((t) => <RibbonTab key={t} $active={t === 'Home'}>{t}</RibbonTab>)}
          <TellMe><Icon w={9} h={12} box="0 0 9 12" c={ink} sw={0.9}><path d="M3 8.500Q3 7.200 1.800 6A3.300 3.300 0 1 1 7.200 6Q6 7.200 6 8.500zM3.200 10.800h2.600" /></Icon>Tell me</TellMe>
          <Spacer />
          <PillRow>
            <Pill><Icon w={10} c={ink}><path d="M1 1.500h10v7H6L3.500 11V8.500H1z" /></Icon>Comments</Pill>
            <Pill><Icon w={10} c={ink}><path d="M4 3.500H1V11h8.500V8M7.500 1.500l3.500 3-3.500 3V6Q5 6 3.500 8 4 3.500 7.500 3z" /></Icon>Share</Pill>
          </PillRow>
        </TabStrip>
        <RibbonTools />
        <FormulaBar>
          <NameBox aria-label="Name box" defaultValue="I5" />
          <Stack><Triangle d="M0 5h6L3 0z" w={7} c="#ccc" /><Triangle d="M0 1h6L3 6z" w={7} c="#ccc" /></Stack>
          <FormulaButtons>
            <Icon w={10} c="#666" sw={1.3}><path d="m2 2 8 8M10 2l-8 8" /></Icon>
            <Icon w={11} c="#666" sw={1.3}><path d="m1 7 3.500 3.500L11 2" /></Icon>
            <Fx>fx</Fx>
          </FormulaButtons>
          <FormulaInput aria-label="Formula" />
          <Tool $w={10} aria-label="Expand formula bar"><Triangle d="M0 1h6L3 6z" c="#ccc" w={6} /></Tool>
        </FormulaBar>
        <Worksheet />
        <SheetTabs>
          <TabArrows><Triangle d="M5.500 0v6L.5 3z" c="#666" w={7} h={7} /><Triangle d="M.5 0v6l5-3z" c="#666" w={7} h={7} /></TabArrows>
          {sheets.map(([name, w]) => <SheetTab key={name} $w={w} $on={name === 'ERP'}>{name}</SheetTab>)}
          <SheetTab $w={26} $plain aria-label="New sheet"><Icon w={8} sw={1.8} c="#b5b5b5"><path d="M6 1v10M1 6h10" /></Icon></SheetTab>
        </SheetTabs>
        <StatusBar>
          <StatusItem>Ready</StatusItem>
          <StatusItem><Icon w={12} c={ink} sw={1.2}><path d="M3.500 3v6M1.500 10.500h6V2h3v1.500M5 2h3" /><circle cx="2.500" cy="2" r="1" fill={ink} /></Icon></StatusItem>
          <StatusItem><Icon w={11} c={ink}><circle cx="5" cy="1.800" r="1.200" /><path d="M1 3l2.800 1.500V7L2 11l1.300.5L5.500 8M10 3 6.500 4.500V6M7.500 7.500l3.500 4M11 7.500l-3.500 4" /></Icon>Accessibility: Investigate</StatusItem>
          <Spacer />
          <ViewButton $on aria-label="Normal view"><Icon w={11} c={ink}><path d="M1 1h10v10H1zM4.300 1v10M7.700 1v10M1 4.300h10M1 7.700h10" /></Icon></ViewButton>
          <ViewButton aria-label="Page layout view"><Icon w={11} c={ink}><path d="M1 1h10v10H1zM3.500 3h5v6h-5zM3.500 5h5M3.500 7h5" /></Icon></ViewButton>
          <ViewButton aria-label="Page break view"><Icon w={11} c={ink}><path d="M1 1h10v10H1zM4.300 1v6M7.700 1v6M1 7h6.700" /></Icon></ViewButton>
          <ZoomGroup>
            <Icon w={7} c={ink} sw={2.2}><path d="M1.500 6h9" /></Icon>
            <Zoom type="range" aria-label="Zoom" defaultValue={50} />
            <Icon w={7} c={ink} sw={2.2}><path d="M6 1.500v9M1.500 6h9" /></Icon>
            <ZoomValue>100%</ZoomValue>
          </ZoomGroup>
        </StatusBar>
      </Window>
    </Desktop>
  );
}
